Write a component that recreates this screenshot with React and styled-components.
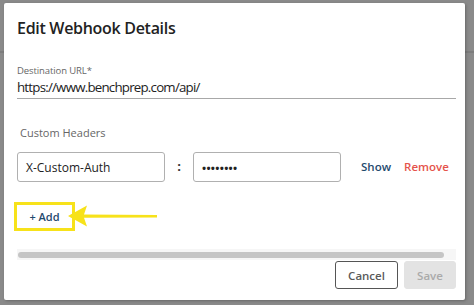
import React from "react";
import styled, { createGlobalStyle } from "styled-components";

const Global = createGlobalStyle`
  html, body { margin: 0; padding: 0; }
  body {
    background: #8a8a8a;
    font-family: "Open Sans", "Liberation Sans", sans-serif;
    width: 474px;
    height: 305px;
    overflow: hidden;
  }
`;

const Backdrop = styled.div`
  width: 474px;
  height: 305px;
  padding: 3px 0 0 4px;
  box-sizing: border-box;
  background:
    linear-gradient(to bottom, transparent 51px, #7d7d7d 51px, #7d7d7d 53px, transparent 53px),
    #8a8a8a;
`;

const Modal = styled.div`
  width: 461px;
  height: 297px;
  background: #fff;
  border-radius: 2px;
  box-sizing: border-box;
  padding: 14px 9px 0 13px;
  display: flex;
  flex-direction: column;
  box-shadow: 1px 1px 3px rgba(0,0,0,0.25);
`;

const Title = styled.h1`
  margin: 0;
  font-size: 16px;
  line-height: 22px;
  font-weight: 600;
  letter-spacing: -0.3px;
  color: #222;
`;

const Field = styled.div`
  margin-top: 26px;
  display: flex;
  flex-direction: column;
  border-bottom: 1px solid #a8a8a8;
  padding-bottom: 2px;
`;

const SmallLabel = styled.label`
  font-size: 9.5px;
  line-height: 12px;
  letter-spacing: -0.1px;
  color: #666;
`;

const UrlText = styled.div`
  margin-top: 2px;
  font-size: 13.3px;
  line-height: 17px;
  letter-spacing: -0.78px;
  color: #222;
`;

const SectionLabel = styled.div`
  margin: 26px 0 0 3px;
  font-size: 11px;
  line-height: 15px;
  color: #666;
`;

const HeaderRow = styled.div`
  margin-top: 12px;
  display: flex;
  align-items: center;
`;

const Input = styled.div`
  width: 148px;
  height: 30px;
  box-sizing: border-box;
  border: 1px solid #b0b0b0;
  border-radius: 3px;
  padding: 0 8px;
  display: flex;
  align-items: center;
  font-size: 12px;
  color: #222;
`;

const Dots = styled.span`
  font-size: 11px;
  letter-spacing: 0.3px;
  font-weight: 700;
`;

const Colon = styled.span`
  width: 28px;
  text-align: center;
  font-size: 13px;
  font-weight: 700;
  color: #333;
  margin-top: -3px;
`;

const LinkBtn = styled.span`
  font-size: 11.5px;
  font-weight: 600;
  color: ${p => p.$danger ? "#e5534b" : "#1f4a6e"};
  margin-left: ${p => p.$gap}px;
  margin-top: -2px;
`;

const AddRow = styled.div`
  margin-top: 20px;
  margin-left: -3px;
  position: relative;
  height: 29px;
`;

const Highlight = styled.div`
  width: 61px;
  height: 29px;
  box-sizing: border-box;
  border: 3px solid #f7e21a;
  display: flex;
  align-items: center;
  justify-content: center;
  font-size: 11px;
  font-weight: 600;
  color: #1f4a6e;
`;

const Arrow = styled.svg`
  position: absolute;
  left: 54px;
  top: 3px;
  display: block;
`;

const ScrollTrack = styled.div`
  margin-top: 18px;
  height: 11px;
  background: #f6f6f6;
  display: flex;
  align-items: center;
  padding-left: 1px;
`;

const ScrollThumb = styled.div`
  width: 426px;
  height: 6px;
  border-radius: 3px;
  background: #c5c5c5;
`;

const Footer = styled.div`
  margin-top: 1px;
  display: flex;
  justify-content: flex-end;
  gap: 6px;
`;

const Button = styled.div`
  height: 28px;
  box-sizing: border-box;
  border-radius: 3px;
  display: flex;
  align-items: center;
  justify-content: center;
  font-size: 11.5px;
  font-weight: 600;
  width: ${p => p.$w}px;
  border: 1px solid ${p => p.$primary ? "#e3e3e3" : "#555"};
  background: ${p => p.$primary ? "#e3e3e3" : "#fff"};
  color: ${p => p.$primary ? "#aaa" : "#5a5a5a"};
`;

export default function App() {
  return (
    <>
      <Global />
      <Backdrop>
        <Modal>
          <Title>Edit Webhook Details</Title>
          <Field>
            <SmallLabel>Destination URL*</SmallLabel>
            <UrlText>https://www.benchprep.com/api/</UrlText>
          </Field>
          <SectionLabel>Custom Headers</SectionLabel>
          <HeaderRow>
            <Input>X-Custom-Auth</Input>
            <Colon>:</Colon>
            <Input><Dots>••••••••</Dots></Input>
            <LinkBtn $gap={20}>Show</LinkBtn>
            <LinkBtn $gap={13} $danger>Remove</LinkBtn>
          </HeaderRow>
          <AddRow>
            <Highlight>+ Add</Highlight>
            <Arrow width="90" height="22" viewBox="0 0 90 22">
              <path d="M0 11 L19 0.5 L16 9.5 L89 10 L89 12.5 L16 12.8 L19 21.5 Z" fill="#f7e21a" />
            </Arrow>
          </AddRow>
          <ScrollTrack><ScrollThumb /></ScrollTrack>
          <Footer>
            <Button $w={63}>Cancel</Button>
            <Button $w={52} $primary>Save</Button>
          </Footer>
        </Modal>
      </Backdrop>
    </>
  );
}
